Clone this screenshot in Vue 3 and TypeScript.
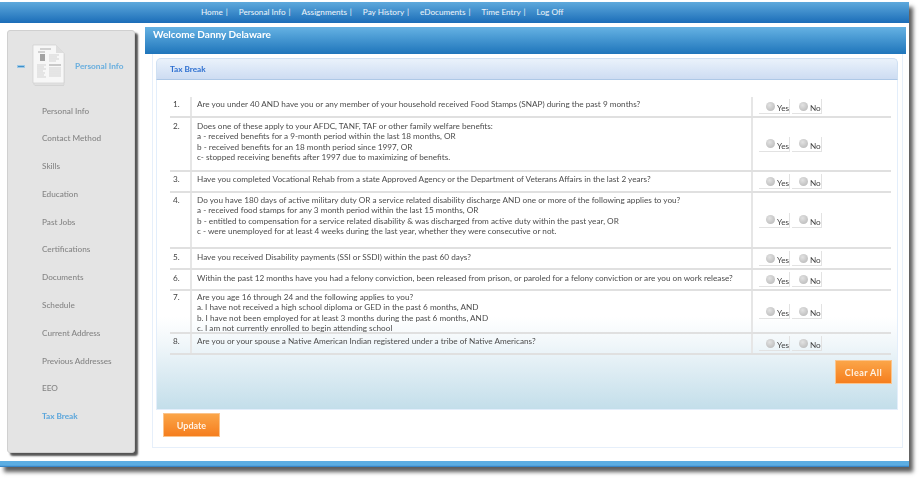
<script setup lang="ts">
interface Question { n: string; lines: string[]; h: number }
const nav: string[] = ['Home', 'Personal Info', 'Assignments', 'Pay History', 'eDocuments', 'Time Entry', 'Log Off']
const side: string[] = ['Personal Info', 'Contact Method', 'Skills', 'Education', 'Past Jobs', 'Certifications', 'Documents', 'Schedule', 'Current Address', 'Previous Addresses', 'EEO', 'Tax Break']
const questions: Question[] = [
  { n: '1.', h: 21, lines: ['Are you under 40 AND have you or any member of your household received Food Stamps (SNAP) during the past 9 months?'] },
  { n: '2.', h: 54, lines: ['Does one of these apply to your AFDC, TANF, TAF or other family welfare benefits:', 'a - received benefits for a 9-month period within the last 18 months, OR', 'b - received benefits for an 18 month period since 1997, OR', 'c- stopped receiving benefits after 1997 due to maximizing of benefits.'] },
  { n: '3.', h: 21, lines: ['Have you completed Vocational Rehab from a state Approved Agency or the Department of Veterans Affairs in the last 2 years?'] },
  { n: '4.', h: 56, lines: ['Do you have 180 days of active military duty OR a service related disability discharge AND one or more of the following applies to you?', 'a - received food stamps for any 3 month period within the last 15 months, OR', 'b - entitled to compensation for a service related disability & was discharged from active duty within the past year, OR', 'c - were unemployed for at least 4 weeks during the last year, whether they were consecutive or not.'] },
  { n: '5.', h: 21, lines: ['Have you received Disability payments (SSI or SSDI) within the past 60 days?'] },
  { n: '6.', h: 21, lines: ['Within the past 12 months have you had a felony conviction, been released from prison, or paroled for a felony conviction or are you on work release?'] },
  { n: '7.', h: 43, lines: ['Are you age 16 through 24 and the following applies to you?', 'a. I have not received a high school diploma or GED in the past 6 months, AND', 'b. I have not been employed for at least 3 months during the past 6 months, AND', 'c. I am not currently enrolled to begin attending school'] },
  { n: '8.', h: 21, lines: ['Are you or your spouse a Native American Indian registered under a tribe of Native Americans?'] },
]
</script>

<template>
  <div class="page">
    <div class="window">
      <header class="topbar">
        <nav class="nav">
          <span v-for="(item, i) in nav" :key="item" class="nav-item">{{ item }}<span v-if="i < nav.length - 1" class="pipe">|</span></span>
        </nav>
      </header>

      <div class="main">
        <aside class="sidebar">
          <div class="side-head">
            <span class="minus"></span>
            <svg class="doc" width="35" height="44" viewBox="0 0 35 44">
              <path d="M3 5h22l7 7v30H3z" fill="#d6d6d6" />
              <path d="M2 3h23l7 7v31H2z" fill="#e6e6e6" stroke="#cfcfcf" stroke-width=".5" />
              <path d="M1 1h23l8 8v30H1z" fill="#f7f7f7" stroke="#c9c9c9" stroke-width=".6" />
              <path d="M24 1v8h8z" fill="#dedede" />
              <path d="M8 5h11M6 8h7" stroke="#8a8a8a" stroke-width=".7" />
              <rect x="8" y="10" width="5" height="7" fill="#a2a2a2" />
              <path d="M17 11h10M17 13h8M17 15h10M17 17h7M5 21h9M5 23h7M5 25h9M5 27h6M5 29h8M5 31h7M5 33h9M17 24h12M17 26h12M17 28h12M17 30h12M17 32h12" stroke="#c2c2c2" stroke-width=".7" />
              <path d="M17 21h12" stroke="#999" stroke-width="1" />
            </svg>
            <span class="side-title">Personal Info</span>
          </div>
          <ul class="side-list">
            <li v-for="item in side" :key="item" :class="{ active: item === 'Tax Break' }">{{ item }}</li>
          </ul>
        </aside>

        <section class="content">
          <h1 class="welcome">Welcome Danny Delaware</h1>
          <div class="panel">
            <div class="panel-head">Tax Break</div>
            <div class="panel-body">
              <div class="table">
                <div v-for="q in questions" :key="q.n" class="row" :style="{ height: q.h + 'px' }">
                  <div class="num">{{ q.n }}</div>
                  <div class="text"><div v-for="line in q.lines" :key="line">{{ line }}</div></div>
                  <div class="answers">
                    <label class="opt yes"><input type="radio" :name="'q' + q.n" /><span>Yes</span></label>
                    <label class="opt no"><input type="radio" :name="'q' + q.n" /><span>No</span></label>
                  </div>
                </div>
              </div>
              <div class="clear-wrap"><button class="btn clear" type="button">Clear All</button></div>
            </div>
            <button class="btn update" type="button">Update</button>
          </div>
        </section>
      </div>
      <div class="bottombar"></div>
    </div>
  </div>
</template>

<style>
html, body { margin: 0; background: #fff; }
</style>

<style scoped>
.page {
  width: 924px;
  height: 483px;
  padding-top: 2px;
  box-sizing: border-box;
  overflow: hidden;
  font-family: Lato, "Open Sans", sans-serif;
  filter: blur(0.4px);
}
.window {
  width: 909px;
  height: 465px;
  background: #fff;
  box-shadow: 4px 5px 4px rgba(40, 40, 40, 0.75);
  display: flex;
  flex-direction: column;
}
.topbar {
  height: 21px;
  flex: none;
  background: linear-gradient(#5ea9dc, #1b6db8);
  display: flex;
  align-items: center;
}
.nav { display: flex; gap: 11px; padding-left: 201px; padding-bottom: 2px; }
.nav-item { color: #eef5fb; font-size: 8.2px; white-space: pre; }
.pipe { margin-left: 2.8px; }
.main { flex: 1; display: flex; align-items: flex-start; min-height: 0; }
.sidebar {
  width: 128px;
  height: 423px;
  margin: 7px 0 0 7px;
  flex: none;
  box-sizing: border-box;
  background: #e4e4e4;
  border: 1px solid #d0d0d0;
  border-radius: 3px;
  box-shadow: 3px 3px 2px #555;
}
.side-head { display: flex; align-items: center; height: 44px; margin-top: 13px; padding-left: 9px; }
.minus { width: 6px; height: 1px; background: #3f8fc9; border: 1px solid #9cc8e6; box-sizing: content-box; margin-right: 7px; }
.doc { flex: none; }
.side-title { color: #68aede; font-size: 8.3px; font-weight: 700; margin-left: 8px; }
.side-list { list-style: none; margin: 9.5px 0 0; padding: 0 0 0 34px; }
.side-list li { height: 27.8px; line-height: 27.8px; color: #858585; font-size: 8.2px; font-weight: 500; }
.side-list li.active { color: #5aa5db; font-weight: 700; }
.content { width: 761px; margin-left: 10px; margin-top: 4px; flex: none; }
.welcome {
  margin: 0;
  height: 27px;
  box-sizing: border-box;
  padding: 2px 0 0 8px;
  background: linear-gradient(#65b2e3, #1f75bb);
  color: #fff;
  font-size: 10px;
  line-height: 11px;
  font-weight: 700;
}
.panel {
  width: 751px;
  height: 394px;
  margin-left: 7px;
  box-sizing: border-box;
  padding: 4px 4px 0 3px;
  background: #fff;
  border: 1px solid #e6effa;
  border-top: 0;
}
.panel-head {
  height: 22px;
  box-sizing: border-box;
  padding-left: 13px;
  line-height: 21px;
  font-size: 8.2px;
  font-weight: 700;
  color: #2d6fd0;
  background: linear-gradient(#eaf2fb, #cddcf2);
  border: 1px solid #cfe0f3;
  border-bottom: 1px solid #aec8e6;
  border-radius: 5px 5px 0 0;
}
.panel-body {
  height: 330px;
  box-sizing: border-box;
  padding: 17px 6px 0 13px;
  border: 1px solid #e3eefb;
  border-top: 0;
  background: linear-gradient(#fff 72%, #f1f7fa 80%, #c3deea 100%);
}
.row { display: flex; box-sizing: border-box; border-bottom: 2px solid #e0e0e0; }
.num { width: 22px; flex: none; box-sizing: border-box; padding: 2px 0 0 3px; font-size: 8.2px; line-height: 10.3px; color: #444; border-right: 2px solid #e6e6e6; }
.text { width: 561px; flex: none; box-sizing: border-box; padding: 2px 0 0 5px; font-size: 8.2px; line-height: 10.3px; color: #4c4c4c; white-space: nowrap; border-right: 2px solid #e6e6e6; }
.row:nth-child(2) .num, .row:nth-child(2) .text,
.row:nth-child(5) .num, .row:nth-child(5) .text,
.row:nth-child(6) .num, .row:nth-child(6) .text { padding-top: 3px; }
.row:nth-child(7) .num, .row:nth-child(7) .text { padding-top: 1px; }
.answers { flex: 1; display: flex; align-items: center; padding-left: 6px; gap: 2px; }
.opt { display: flex; align-items: center; box-sizing: border-box; width: 31px; height: 15px; padding-left: 7px; gap: 2px; font-size: 8.2px; color: #444; border-right: 1px solid #e2e2e2; border-bottom: 1px solid #e2e2e2; }
.opt.no { width: 30px; }
.opt span { position: relative; top: 2px; }
.opt input {
  appearance: none;
  margin: 0;
  width: 9px;
  height: 9px;
  flex: none;
  border-radius: 50%;
  background: radial-gradient(circle at 40% 35%, #e2e2e2, #b4b4b4);
  border: 0;
}
.clear-wrap { display: flex; justify-content: flex-end; margin-top: 5px; margin-right: -1px; }
.btn {
  width: 57px;
  height: 24px;
  padding: 0;
  border: 1px solid #fbc48c;
  background: linear-gradient(#fba548, #f57e1e);
  color: #fff2e4;
  font-family: inherit;
  font-size: 9px;
  font-weight: 700;
}
.clear { letter-spacing: 0.45px; }
.update { display: block; margin: 3px 0 0 7px; }
.bottombar { height: 6px; margin-top: auto; flex: none; background: linear-gradient(#5cade2 70%, #2a75bb); }
</style>
